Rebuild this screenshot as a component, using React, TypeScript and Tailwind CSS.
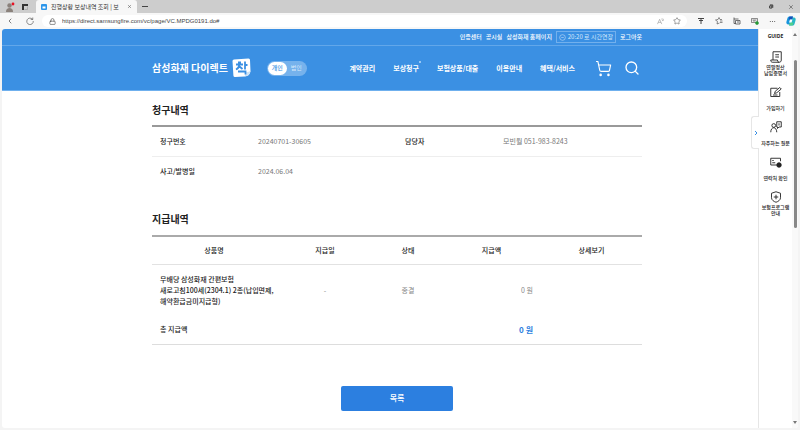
import type { ReactNode } from "react";
import { ChevronLeft, Lock, Search, ShoppingCart, Star, X } from "lucide-react";

const SANS = "font-['Noto_Sans_CJK_KR','Noto_Sans',sans-serif]";

const NAV = ["계약관리", "보상청구", "보험상품/대출", "이용안내", "혜택/서비스"];

function Icon({ children, className }: { children: ReactNode; className: string }) {
  return (
    <svg viewBox="0 0 16 16" fill="none" stroke="currentColor" strokeWidth="1.2" className={className} aria-hidden="true">
      {children}
    </svg>
  );
}

function BrowserTabs() {
  return (
    <div className="flex h-[13px] shrink-0 items-end bg-[#cdcdcd] text-[#333]">
      <button aria-label="프로필" className="ml-[5px] flex h-[13px] w-2.5 items-center">
        <svg viewBox="0 0 10 12" className="h-3 w-2.5" aria-hidden="true">
          <circle cx="4.5" cy="4.5" r="2.2" fill="#8a817b" />
          <path d="M1 11c0-3 1.5-4 3.500-4S8 8 8 11z" fill="#8a817b" />
          <circle cx="8" cy="3" r="1.400" fill="#e81123" />
        </svg>
      </button>
      <button aria-label="작업 영역" className="ml-1.5 flex h-[13px] items-center">
        <svg viewBox="0 0 8 8" className="size-2" aria-hidden="true">
          <path d="M1 1h6v2H3v4H1z" fill="#333" />
          <path d="M6.500 3.500V6.500H3.500" fill="none" stroke="#999" strokeWidth="0.600" />
        </svg>
      </button>
      <div className="ml-[7px] flex h-[13px] w-[101px] items-center rounded-t-[3px] bg-[#f7f7f7] px-[5px]">
        <svg viewBox="0 0 6 6" className="size-1.5 shrink-0" aria-hidden="true">
          <rect width="6" height="6" rx="1" fill="#2b95ea" />
          <path d="M1.500 2.500h3v2h-3z" fill="#fff" />
        </svg>
        <span className="ml-1 flex-1 text-[6px] leading-[12px] whitespace-nowrap">진행상황 보상내역 조회 | 보</span>
        <button aria-label="탭 닫기" className="ml-1"><X className="size-[5px]" /></button>
      </div>
      <button aria-label="새 탭" className="flex h-[13px] w-4 items-center justify-center">
        <span className="h-px w-1.5 bg-[#444]" />
      </button>
      <div className="ml-auto flex h-[13px] items-center gap-3.5 pr-1.5">
        <button aria-label="창 복원">
          <Icon className="size-[5px]"><path d="M3 3h9v9M2 6h7v7H2z" strokeWidth="3" /></Icon>
        </button>
        <button aria-label="창 닫기"><X className="size-1.5" /></button>
      </div>
    </div>
  );
}

function AddressBar() {
  return (
    <div className="flex h-4 shrink-0 items-center bg-[#f7f7f7] text-[#444]">
      <button aria-label="뒤로" className="ml-1.5"><ChevronLeft className="size-2" /></button>
      <button aria-label="새로 고침" className="ml-3">
        <Icon className="size-2"><path d="M13 4.500A6.500 6.500 0 1 0 14.500 8M13.500 1v4h-4" /></Icon>
      </button>
      <div className="ml-2 flex h-3 flex-1 items-center rounded-full bg-white pr-1.5 pl-[7px]">
        <Lock className="size-[7px]" />
        <input
          aria-label="주소"
          className="ml-1.5 h-3 min-w-0 flex-1 font-['Liberation_Sans',sans-serif] text-[6px] text-[#444] outline-none"
          defaultValue="https://direct.samsungfire.com/vc/page/VC.MPDG0191.do#"
        />
        <button aria-label="소리내어 읽기" className="text-[#888]">
          <Icon className="size-[7px]"><path d="M1 14L6 3l5 11M3 10h6M10 2c2 1 3 3 3 5M13 1c1 1 2 3 2 5" /></Icon>
        </button>
        <button aria-label="즐겨찾기 추가" className="ml-[9px]"><Star className="size-2" strokeWidth={1.5} /></button>
      </div>
      <div className="flex items-center gap-2.5 pr-1 pl-2.5">
        <button aria-label="텍스트">
          <Icon className="size-2"><path d="M2 3h12M8 3v11M4 7h8" strokeWidth="2" /></Icon>
        </button>
        <button aria-label="즐겨찾기">
          <Icon className="size-2"><path d="M9 12l-5 2 1-5-4-3 5-1 2-4 2 4h4M10 8h5M10 11h5" /></Icon>
        </button>
        <button aria-label="컬렉션">
          <Icon className="size-2"><path d="M2 1v12h3M2 4h9M5 7h9v7H5zM8 10h4" strokeWidth="1.500" /></Icon>
        </button>
        <button aria-label="브라우저 상태">
          <Icon className="size-2"><path d="M1 3h12v8H1zM3 6h8M4 8h5" /><circle cx="12" cy="12" r="3" fill="#279b37" stroke="#279b37" /></Icon>
        </button>
        <button aria-label="더 보기">
          <Icon className="size-[7px]"><path d="M2 8h2M7 8h2M12 8h2" strokeWidth="2" /></Icon>
        </button>
        <button aria-label="코파일럿">
          <svg viewBox="0 0 20 20" className="size-2.5" aria-hidden="true">
            <path d="M7 1h7l-3 9-3 7H5c-4 0-5-3-4-6l2-7c1-2 2-3 4-3z" fill="#1795dc" />
            <path d="M13 3h3c3 0 4 3 3 6l-2 7c-1 2-2 3-4 3H6l3-9z" fill="#27b7c8" />
            <path d="M7 1h7l-2 6H5z" fill="#164fb8" />
            <path d="M8 13h7l-2 6H6z" fill="#52cf8b" />
            <path d="M8 7h5l-2 6H6z" fill="#fff" />
          </svg>
        </button>
      </div>
    </div>
  );
}

function SiteHeader() {
  return (
    <header className="border-b border-[#6fb0ee] bg-[#3b90e3] text-white">
      <div className="border-b border-[#62a7ea] pl-[34px]">
        <div className="mx-auto flex h-4 max-w-[490px] items-center justify-end gap-1 text-[6px] leading-[10px] font-medium whitespace-nowrap">
          <a href="#auth">인증센터</a>
          <a href="#notice">공시실</a>
          <a href="#home">삼성화재 홈페이지</a>
          <button className="flex h-3 w-[60px] items-center justify-center gap-0.5 border border-[#72b0ed] font-normal text-[#d5e8fb]">
            <Icon className="size-[7px]"><circle cx="8" cy="8" r="6.500" /><path d="M5 8h6" /></Icon>
            20:20 로 시간연장
          </button>
          <a href="#logout">로그아웃</a>
        </div>
      </div>
      <div className="pl-[34px]">
        <div className="mx-auto flex h-11 max-w-[490px] items-center whitespace-nowrap">
          <a href="#main" className="flex items-center gap-1 text-[10px] leading-4 font-bold">
            삼성화재 다이렉트
            <svg viewBox="0 0 19 20" className="h-5 w-[19px]" aria-hidden="true">
              <path d="M2 1.500L16.500.5Q18 .5 18 2L18.500 13Q18 18 12.500 18.500L3 19Q1.500 19 1.400 17.500L.5 3Q.5 1.600 2 1.500z" fill="#fff" />
              <path d="M12.500 18.500Q14 16 13.500 14Q16 14.500 18.500 13Q18 18 12.500 18.500z" fill="#cfe3f6" />
              <path d="M6 4.500h3M4 6.500h7M7.500 6.500Q7 10 4 11.500M7.500 8.500L10.500 11M13 3.500v8M13 7h2.500M6 13.500h7.500v3" fill="none" stroke="#3b90e3" strokeWidth="1.800" />
            </svg>
          </a>
          <div className="ml-4 flex h-[15px] w-10 items-center rounded-full bg-[#76b2ec] p-px text-[6px] leading-[10px]">
            <button className="h-[13px] w-[19px] rounded-full bg-white font-medium text-[#3b90e3]">개인</button>
            <button className="flex-1 text-[#d5e8fb]">법인</button>
          </div>
          <nav className="ml-auto flex gap-[18px] text-[7px] leading-3 font-bold">
            {NAV.map((item) => (
              <a key={item} href="#menu" className="relative">
                {item}
                {item === "보상청구" && <span className="absolute -top-px -right-0.5 size-0.5 rounded-full bg-[#b9dafa]" />}
              </a>
            ))}
          </nav>
          <button aria-label="장바구니" className="ml-5"><ShoppingCart className="size-[17px]" strokeWidth={1.6} /></button>
          <button aria-label="검색" className="mr-0.5 ml-3"><Search className="size-4" strokeWidth={2} /></button>
        </div>
      </div>
    </header>
  );
}

function ClaimDetails() {
  const label = "px-2 text-left font-medium text-[#222]";
  const value = "px-2 text-[#777]";
  return (
    <section>
      <h2 className="text-[10px] leading-4 font-bold text-[#222]">청구내역</h2>
      <table className="mt-[7px] w-full table-fixed border-t-2 border-[#999] text-[7px] leading-[11px]">
        <colgroup>
          <col className="w-[20%]" /><col className="w-[30%]" /><col className="w-[20%]" /><col className="w-[30%]" />
        </colgroup>
        <tbody>
          <tr className="h-[30px] border-b border-[#eee]">
            <th scope="row" className={label}>청구번호</th>
            <td className={value}>20240701-30605</td>
            <th scope="row" className={label}>담당자</th>
            <td className={value}>모빈월 051-983-8243</td>
          </tr>
          <tr className="h-[30px]">
            <th scope="row" className={label}>사고/발병일</th>
            <td className={value} colSpan={3}>2024.06.04</td>
          </tr>
        </tbody>
      </table>
    </section>
  );
}

function PaymentDetails() {
  return (
    <section className="mt-[25px]">
      <h2 className="text-[10px] leading-4 font-bold text-[#222]">지급내역</h2>
      <table className="mt-2 w-full table-fixed border-t-2 border-b border-t-[#aaa] border-b-[#ddd] text-[7px] leading-[11px] text-[#222]">
        <colgroup>
          <col className="w-[124px]" /><col className="w-[98px]" /><col className="w-[68px]" /><col className="w-[99px]" /><col className="w-[101px]" />
        </colgroup>
        <thead>
          <tr className="h-7 border-b border-[#e2e2e2]">
            {["상품명", "지급일", "상태", "지급액", "상세보기"].map((h) => (
              <th key={h} scope="col" className="font-medium">{h}</th>
            ))}
          </tr>
        </thead>
        <tbody>
          <tr className="h-[52px] text-center text-[#888]">
            <th scope="row" className="pl-2 text-left font-medium whitespace-nowrap text-[#222]">
              무배당 삼성화재 간편보험<br />새로고침100세(2304.1) 2종(납입면제,<br />해약환급금미지급형)
            </th>
            <td>-</td>
            <td>종결</td>
            <td className="pr-2 text-right">0 원</td>
            <td />
          </tr>
          <tr className="h-7">
            <th scope="row" className="pl-2 text-left font-medium">총 지급액</th>
            <td />
            <td />
            <td className="pr-2 text-right text-[8px] font-bold text-[#2c7fe0]">0 원</td>
            <td />
          </tr>
        </tbody>
      </table>
    </section>
  );
}

const GUIDE: { lines: string[]; art: ReactNode }[] = [
  { lines: ["연말정산", "납입증명서"], art: <><path d="M4 1h11v11c0 2-1 3-3 3H3c-1 0-2-1-2-3h9c0 2 1 3 2 3M4 1v11M7 5h5M7 8h5" /></> },
  { lines: ["가입하기"], art: <><path d="M13 8v6H1V3h9M6 10l1-3 6-5 2 2-6 5zM4 12h6" /></> },
  { lines: ["자주하는 질문"], art: <><circle cx="5" cy="6" r="2.500" /><path d="M1 15c0-4 2-6 4-6s4 2 4 6M9 1h6v7h-3l-2 2V8H9zM12 3v3" /></> },
  { lines: ["연락처 확인"], art: <><path d="M9 12H1V3h13v4M3 6h2M3 9h4" /><circle cx="12" cy="12" r="3" fill="currentColor" /></> },
  { lines: ["보험프로그램", "안내"], art: <><path d="M8 1l6 2v6c0 3-3 5-6 6-3-1-6-3-6-6V3zM8 5v6M5 8h6" /></> },
];

function GuideRail() {
  return (
    <aside className="relative w-[34px] shrink-0 border-l border-[#e6e6e6] bg-white text-center text-[#222]">
      <button aria-label="가이드 열기" className="absolute top-[87px] -left-2 flex h-[33px] w-2 items-center justify-center rounded-l-[3px] border border-r-0 border-[#e6e6e6] bg-white text-[#3b90e3]">
        <svg viewBox="0 0 4 6" className="h-1.5 w-1" fill="none" stroke="currentColor" aria-hidden="true"><path d="M1 1l2 2-2 2" /></svg>
      </button>
      <strong className="mt-0.5 block font-['Open_Sans',sans-serif] text-[5px] leading-[10px]">GUIDE</strong>
      <ul className="mt-2.5 flex flex-col text-[5px] leading-[6px] font-medium whitespace-nowrap">
        {GUIDE.map((g) => (
          <li key={g.lines[0]} className="h-[35px]">
            <a href="#guide" className="flex flex-col items-center gap-px">
              <Icon className="size-3">{g.art}</Icon>
              <span className="flex h-3 flex-col justify-end">{g.lines.map((l) => <span key={l}>{l}</span>)}</span>
            </a>
          </li>
        ))}
      </ul>
    </aside>
  );
}

function Scrollbar() {
  return (
    <div className="flex w-[6px] shrink-0 flex-col items-center bg-[#f9f9f9] py-1" aria-hidden="true">
      <svg viewBox="0 0 4 3" className="h-[3px] w-1"><path d="M0 3l2-3 2 3z" fill="#777" /></svg>
      <div className="mt-6 h-[168px] w-[3px] rounded-full bg-[#888]" />
      <svg viewBox="0 0 4 3" className="mt-auto h-[3px] w-1"><path d="M0 0h4l-2 3z" fill="#777" /></svg>
    </div>
  );
}

export default function App() {
  return (
    <div className={`flex min-h-screen flex-col bg-[#f4f4f4] ${SANS}`}>
      <BrowserTabs />
      <AddressBar />
      <div className="mx-0.5 mb-0.5 flex flex-1 overflow-hidden rounded-[3px] bg-white">
        <div className="min-w-0 flex-1">
          <SiteHeader />
          <main className="pl-[34px]">
            <div className="mx-auto max-w-[490px] pt-[11px]">
              <ClaimDetails />
              <PaymentDetails />
              <button className="mx-auto mt-[41px] block h-[25px] w-28 rounded-[2px] bg-[#2c7fe0] text-[8px] leading-3 font-medium text-white">목록</button>
            </div>
          </main>
        </div>
        <GuideRail />
        <Scrollbar />
      </div>
    </div>
  );
}
